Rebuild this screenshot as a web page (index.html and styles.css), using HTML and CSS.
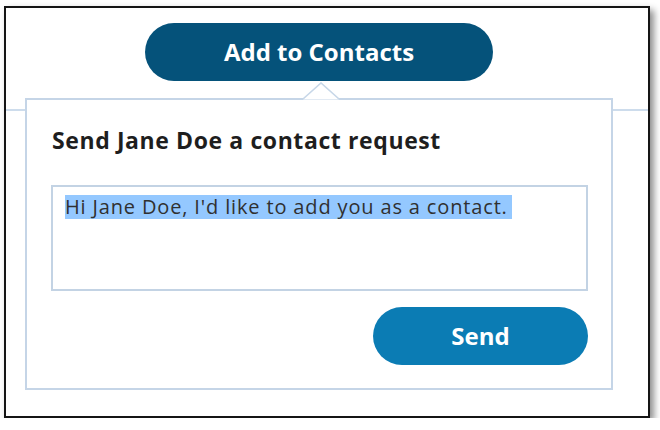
FILE: index.html
```html
<!DOCTYPE html>
<html lang="en">
<head>
<meta charset="utf-8">
<title>Add to Contacts</title>
<link rel="stylesheet" href="styles.css">
</head>
<body>
<div class="frame">
  <div class="column">
    <button class="add-btn" type="button">Add to Contacts</button>
    <div class="popup">
      <svg class="notch" width="36" height="18" viewBox="0 0 36 18" aria-hidden="true">
        <polygon points="0,17.5 18,0.5 36,17.5" fill="#fff"/>
        <polyline points="0,17 18,1 36,17" fill="none" stroke="#c7d7e8" stroke-width="1.6"/>
      </svg>
      <h2 class="title">Send Jane Doe a contact request</h2>
      <div class="message"><span class="selected">Hi Jane Doe, I'd like to add you as a contact.</span></div>
      <div class="actions">
        <button class="send-btn" type="button">Send</button>
      </div>
    </div>
  </div>
</div>
</body>
</html>
```
FILE: styles.css
```css
html, body {
  margin: 0;
  padding: 0;
  background: #ffffff;
}

body {
  font-family: "Open Sans", "Noto Sans", "Liberation Sans", sans-serif;
}

.frame {
  margin: 6px 0 0 4px;
  width: 642px;
  height: 408px;
  border: 2px solid #151515;
  background:
    linear-gradient(#ffffff 0 101px, #cddcec 101px 103px, #ffffff 103px);
  box-shadow: 4px 4px 7px rgba(0, 0, 0, 0.45);
}

.column {
  margin-left: 19px;
  width: 588px;
  padding-top: 15px;
  display: flex;
  flex-direction: column;
  align-items: center;
}

.add-btn {
  width: 348px;
  height: 58px;
  border: none;
  border-radius: 29px;
  background: #05527a;
  color: #ffffff;
  font-family: inherit;
  font-size: 24px;
  font-weight: 700;
  padding: 0 0 2px;
}

.popup {
  position: relative;
  margin-top: 17px;
  width: 588px;
  height: 292px;
  box-sizing: border-box;
  border: 2px solid #c5d5e7;
  background: #ffffff;
  padding: 25px 23px 0 24px;
}

.notch {
  position: absolute;
  left: 276px;
  top: -18px;
}

.title {
  margin: 0 0 0 1px;
  font-size: 23px;
  line-height: 30px;
  font-weight: 700;
  letter-spacing: 0.6px;
  color: #1e1e1e;
}

.message {
  margin-top: 30px;
  height: 106px;
  box-sizing: border-box;
  border: 2px solid #c3d3e4;
  padding: 8px 12px;
  font-size: 20px;
  line-height: 24px;
  letter-spacing: 0.85px;
  color: #303030;
}

.selected {
  display: inline-block;
  padding-right: 4px;
  line-height: 24px;
  background: #94c8ff;
}

.actions {
  display: flex;
  justify-content: flex-end;
  margin-top: 16px;
}

.send-btn {
  width: 215px;
  height: 58px;
  border: none;
  border-radius: 29px;
  background: #0b7cb4;
  color: #ffffff;
  font-family: inherit;
  font-size: 24px;
  font-weight: 700;
  padding: 0 0 2px;
}
```
